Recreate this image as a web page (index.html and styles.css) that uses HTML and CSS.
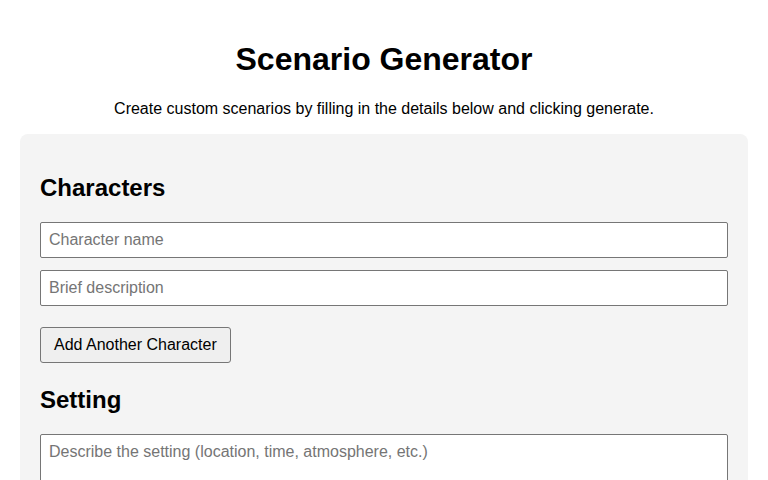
FILE: index.html
```html
<!DOCTYPE html>
<html lang="en">
<head>
<meta charset="utf-8">
<title>Scenario Generator</title>
<link rel="stylesheet" href="styles.css">
</head>
<body>
<h1 class="title">Scenario Generator</h1>
<p class="intro">Create custom scenarios by filling in the details below and clicking generate.</p>
<div class="panel">
  <h2 class="section-title">Characters</h2>
  <div class="character">
    <input class="field" type="text" placeholder="Character name">
    <input class="field" type="text" placeholder="Brief description">
  </div>
  <div class="actions">
    <button class="btn" type="button">Add Another Character</button>
  </div>
  <h2 class="section-title">Setting</h2>
  <textarea class="field area" rows="4" placeholder="Describe the setting (location, time, atmosphere, etc.)"></textarea>
</div>
</body>
</html>
```

FILE: styles.css
```css
html, body {
  background: #ffffff;
}
body {
  margin: 0;
  padding: 20px;
  font-family: "Liberation Sans", Arial, sans-serif;
  color: #000;
}
.title {
  font-size: 32px;
  text-align: center;
  margin: 21.44px 0;
}
.intro {
  font-size: 16px;
  text-align: center;
  margin: 16px 0;
}
.panel {
  background: #f4f4f4;
  border-radius: 8px;
  padding: 20px;
}
.section-title {
  font-size: 24px;
  margin: 19.92px 0;
}
.character {
  display: flex;
  flex-direction: column;
  gap: 12px;
  margin-bottom: 21.5px;
}
.field {
  display: block;
  width: 100%;
  box-sizing: border-box;
  font-family: "Liberation Sans", Arial, sans-serif;
  font-size: 16px;
  line-height: normal;
  padding: 8px;
  border: 1px solid #767676;
  border-radius: 2px;
  background: #fff;
  margin: 0;
  color: #000;
}
.field::placeholder {
  color: #757575;
}
.area {
  resize: vertical;
  height: 100px;
}
.actions {
  display: flex;
  padding-bottom: 2.5px;
}
.btn {
  font-family: "Liberation Sans", Arial, sans-serif;
  font-size: 16px;
  line-height: normal;
  padding: 8px 13px;
  border: 1px solid #767676;
  border-radius: 3px;
  background: #efefef;
  color: #000;
}
```
